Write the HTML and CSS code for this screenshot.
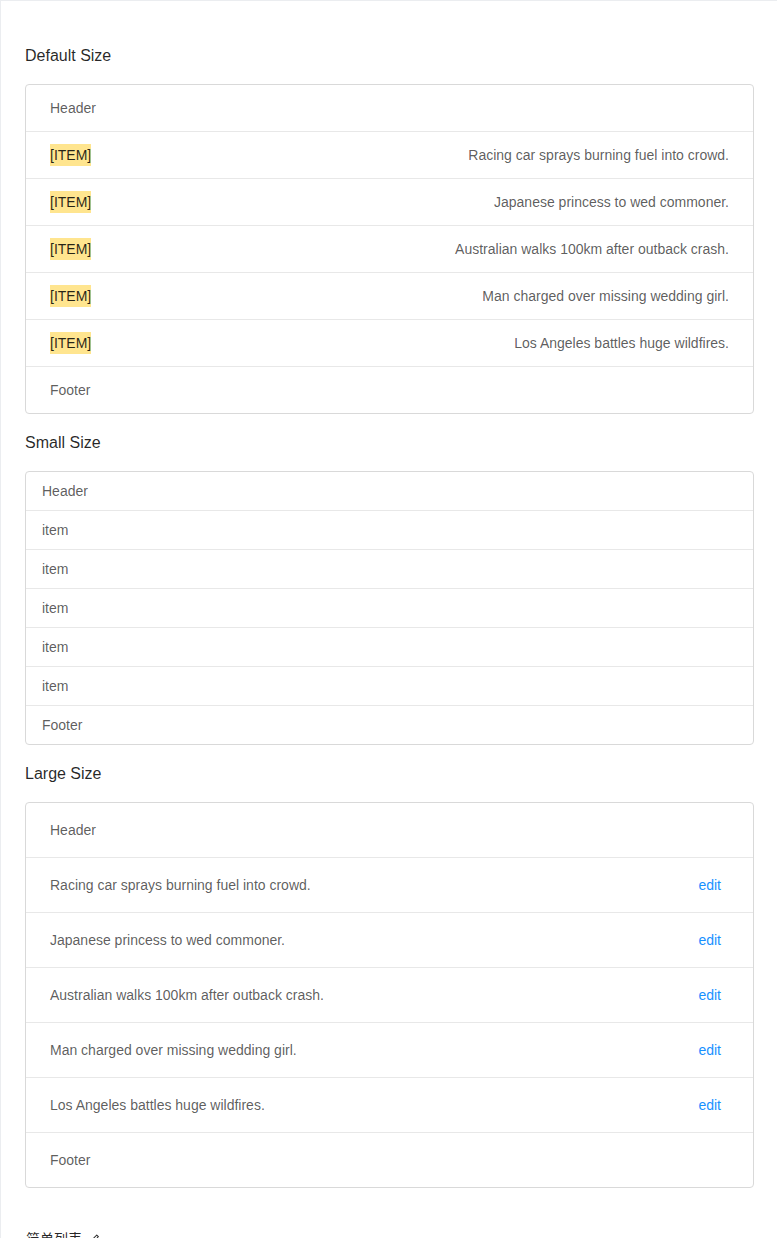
FILE: index.html
```html
<!DOCTYPE html>
<html>
<head>
<meta charset="utf-8">
<link rel="stylesheet" href="styles.css">
</head>
<body>
<section class="card">
  <h3 class="title">Default Size</h3>
  <div class="list list-default">
    <div class="list-header">Header</div>
    <div class="item"><mark class="mark">[ITEM]</mark><span class="desc">Racing car sprays burning fuel into crowd.</span></div>
    <div class="item"><mark class="mark">[ITEM]</mark><span class="desc">Japanese princess to wed commoner.</span></div>
    <div class="item"><mark class="mark">[ITEM]</mark><span class="desc">Australian walks 100km after outback crash.</span></div>
    <div class="item"><mark class="mark">[ITEM]</mark><span class="desc">Man charged over missing wedding girl.</span></div>
    <div class="item"><mark class="mark">[ITEM]</mark><span class="desc">Los Angeles battles huge wildfires.</span></div>
    <div class="list-footer">Footer</div>
  </div>

  <h3 class="title">Small Size</h3>
  <div class="list list-small">
    <div class="list-header">Header</div>
    <div class="item">item</div>
    <div class="item">item</div>
    <div class="item">item</div>
    <div class="item">item</div>
    <div class="item">item</div>
    <div class="list-footer">Footer</div>
  </div>

  <h3 class="title">Large Size</h3>
  <div class="list list-large">
    <div class="list-header">Header</div>
    <div class="item"><span class="text">Racing car sprays burning fuel into crowd.</span><a class="action">edit</a></div>
    <div class="item"><span class="text">Japanese princess to wed commoner.</span><a class="action">edit</a></div>
    <div class="item"><span class="text">Australian walks 100km after outback crash.</span><a class="action">edit</a></div>
    <div class="item"><span class="text">Man charged over missing wedding girl.</span><a class="action">edit</a></div>
    <div class="item"><span class="text">Los Angeles battles huge wildfires.</span><a class="action">edit</a></div>
    <div class="list-footer">Footer</div>
  </div>

  <div class="meta">
    <span class="meta-title">简单列表</span>
    <svg class="edit-icon" viewBox="0 0 1024 1024" width="13" height="13" aria-hidden="true">
      <path fill="currentColor" d="M257.7 752c2 0 4-.2 6-.5L431.9 722c2-.4 3.9-1.3 5.3-2.8l423.9-423.9a9.96 9.96 0 0 0 0-14.1L694.9 114.9c-1.9-1.9-4.4-2.9-7.1-2.9s-5.2 1-7.1 2.9L256.8 538.8c-1.5 1.5-2.4 3.3-2.8 5.3l-29.5 168.2a33.5 33.5 0 0 0 9.4 29.8c6.6 6.4 14.9 9.9 23.8 9.9zm67.4-174.4L687.8 215l73.3 73.3-362.7 362.6-88.9 15.7 15.6-89zM880 836H144c-17.7 0-32 14.3-32 32v36c0 4.4 3.6 8 8 8h784c4.4 0 8-3.6 8-8v-36c0-17.7-14.3-32-32-32z"/>
    </svg>
  </div>
</section>
</body>
</html>
```
FILE: styles.css
```css
html, body {
  margin: 0;
  padding: 0;
  background: #fff;
}
body {
  font-family: "Liberation Sans", Arial, "Noto Sans CJK SC", sans-serif;
  font-size: 14px;
  line-height: 22px;
  color: rgba(0, 0, 0, 0.65);
  overflow: hidden;
}
.card {
  border-top: 1px solid #ebedf0;
  border-left: 1px solid #ebedf0;
  padding: 26px 23px 0 24px;
  min-height: 1300px;
  box-sizing: border-box;
}
.title {
  margin: 17px 0 16px;
  font-size: 16px;
  line-height: 24px;
  font-weight: normal;
  color: rgba(0, 0, 0, 0.85);
}
.list {
  border: 1px solid #d9d9d9;
  border-radius: 4px;
}
.list-header,
.list-footer {
  padding: 12px 24px;
}
.list-header {
  border-bottom: 1px solid #e8e8e8;
}
.item {
  display: flex;
  align-items: center;
  justify-content: space-between;
  padding: 12px 24px;
  border-bottom: 1px solid #e8e8e8;
}
.mark {
  background: #ffe58f;
  color: rgba(0, 0, 0, 0.85);
  padding: 0;
}
.desc {
  text-align: right;
}
.list-small .list-header,
.list-small .list-footer,
.list-small .item {
  padding: 8px 16px;
}
.list-large .list-header,
.list-large .list-footer,
.list-large .item {
  padding: 16px 24px;
}
.action {
  color: #1890ff;
  padding-right: 8px;
  cursor: pointer;
}
.meta {
  margin-top: 40px;
  padding-left: 1px;
  display: flex;
  align-items: center;
  gap: 6px;
  color: rgba(0, 0, 0, 0.85);
}
.edit-icon {
  color: rgba(0, 0, 0, 0.85);
}
```
